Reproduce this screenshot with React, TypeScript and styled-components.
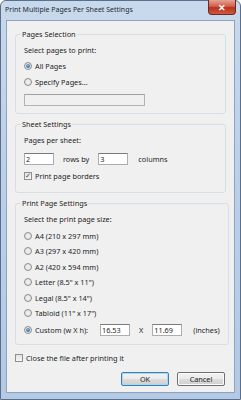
import React from "react";
import styled, { createGlobalStyle } from "styled-components";

const Global = createGlobalStyle`
  html, body { margin: 0; padding: 0; background: #ffffff; }
  body { font-family: "Noto Sans", "Liberation Sans", sans-serif; font-size: 7.3px; color: #1e1e1e; }
  * { box-sizing: border-box; }
`;

const Window = styled.div`
  width: 241px;
  height: 400px;
  background: linear-gradient(180deg, #c9d9ec 0%, #bcd0e8 40%, #b3c9e4 100%);
  border: 1px solid #5a6f8c;
  border-radius: 6px 6px 0 0;
  display: flex;
  flex-direction: column;
`;

const TitleBar = styled.div`
  height: 19px;
  display: flex;
  align-items: flex-start;
  justify-content: space-between;
  padding-left: 4px;
  padding-right: 4px;
`;

const Title = styled.span`
  margin-top: 4px;
  font-size: 7px;
  color: #1c2a3a;
`;

const CloseButton = styled.div`
  width: 28px;
  height: 15px;
  margin-top: -1px;
  border: 1px solid #6b2a22;
  border-top: none;
  border-radius: 0 0 4px 4px;
  background: linear-gradient(180deg, #e6a393 0%, #d0614c 45%, #b9311d 55%, #cf5b3e 100%);
  display: flex;
  align-items: center;
  justify-content: center;
  color: #ffffff;
  font-size: 9px;
  font-weight: bold;
`;

const Client = styled.div`
  flex: 1;
  margin: 0 5px 6px 5px;
  border: 1px solid #8da3bf;
  background: #f0f0f0;
  display: flex;
  flex-direction: column;
  padding: 8px 8px 0 8px;
`;

const Group = styled.fieldset`
  margin: 0 0 5px 0;
  padding: 6px 8px 6px 8px;
  border: 1px solid #d5dfe5;
  border-radius: 3px;
  display: flex;
  flex-direction: column;
  gap: 0;
`;

const Legend = styled.legend`
  padding: 0 1px;
  margin-left: -3px;
  line-height: 10px;
`;

const Label = styled.div<{ $mb?: number }>`
  line-height: 10px;
  margin-bottom: ${(p) => p.$mb ?? 0}px;
`;

const OptionRow = styled.div<{ $h?: number }>`
  display: flex;
  align-items: center;
  height: ${(p) => p.$h ?? 16}px;
  gap: 3px;
`;

const Radio = styled.span<{ $on?: boolean }>`
  width: 8px;
  height: 8px;
  border-radius: 50%;
  border: 1px solid #8f8f8f;
  background: radial-gradient(circle at 50% 50%, #f4f4f4 0%, #dcdcdc 100%);
  display: flex;
  align-items: center;
  justify-content: center;
  &::after {
    content: "";
    width: 4px;
    height: 4px;
    border-radius: 50%;
    background: ${(p) => (p.$on ? "radial-gradient(circle at 40% 35%, #7fb6e6, #17508f)" : "transparent")};
  }
`;

const Check = styled.span<{ $on?: boolean }>`
  width: 8px;
  height: 8px;
  border: 1px solid #8f8f8f;
  background: linear-gradient(180deg, #e4e4e4, #f6f6f6);
  display: flex;
  align-items: center;
  justify-content: center;
  color: #2b4c7a;
  font-size: 7px;
  line-height: 1;
`;

const TextBox = styled.div<{ $w: number; $disabled?: boolean }>`
  width: ${(p) => p.$w}px;
  height: 12px;
  border: 1px solid ${(p) => (p.$disabled ? "#b4b4b4" : "#abadb3")};
  border-top-color: ${(p) => (p.$disabled ? "#a0a0a0" : "#7a7a7a")};
  background: ${(p) => (p.$disabled ? "#f0f0f0" : "#ffffff")};
  font-size: 7.3px;
  line-height: 10px;
  padding-left: 1px;
`;

const InlineRow = styled.div<{ $mt?: number; $mb?: number }>`
  display: flex;
  align-items: center;
  height: 12px;
  margin-top: ${(p) => p.$mt ?? 0}px;
  margin-bottom: ${(p) => p.$mb ?? 0}px;
`;

const Spacer = styled.span<{ $w: number }>`
  display: inline-block;
  width: ${(p) => p.$w}px;
`;

const CustomLabel = styled.span`
  width: 62px;
`;

const Footer = styled.div`
  display: flex;
  flex-direction: column;
`;

const Buttons = styled.div`
  display: flex;
  justify-content: flex-end;
  gap: 8px;
  margin-top: 6px;
  padding-right: 1px;
`;

const Button = styled.div<{ $default?: boolean }>`
  width: 48px;
  height: 14px;
  border: 1px solid ${(p) => (p.$default ? "#3c7fb1" : "#707070")};
  border-radius: 2px;
  background: linear-gradient(180deg, #f2f2f2 0%, #ebebeb 50%, #dddddd 51%, #cfcfcf 100%);
  box-shadow: ${(p) => (p.$default ? "inset 0 0 0 1px #a8d8f4" : "inset 0 0 0 1px #fbfbfb")};
  display: flex;
  align-items: center;
  justify-content: center;
  line-height: 10px;
`;

const radios = [
  "A4 (210 x 297 mm)",
  "A3 (297 x 420 mm)",
  "A2 (420 x 594 mm)",
  "Letter (8.5\" x 11\")",
  "Legal (8.5\" x 14\")",
  "Tabloid (11\" x 17\")",
];

export default function App() {
  return (
    <>
      <Global />
      <Window>
        <TitleBar>
          <Title>Print Multiple Pages Per Sheet Settings</Title>
          <CloseButton>✕</CloseButton>
        </TitleBar>
        <Client>
          <Group>
            <Legend>Pages Selection</Legend>
            <Label $mb={3}>Select pages to print:</Label>
            <OptionRow>
              <Radio $on />
              <span>All Pages</span>
            </OptionRow>
            <OptionRow>
              <Radio />
              <span>Specify Pages...</span>
            </OptionRow>
            <InlineRow $mt={4} $mb={1}>
              <TextBox $w={121} $disabled />
            </InlineRow>
          </Group>
          <Group>
            <Legend>Sheet Settings</Legend>
            <Label $mb={8}>Pages per sheet:</Label>
            <InlineRow>
              <TextBox $w={30}>2</TextBox>
              <Spacer $w={9} />
              <span>rows by</span>
              <Spacer $w={9} />
              <TextBox $w={30}>3</TextBox>
              <Spacer $w={10} />
              <span>columns</span>
            </InlineRow>
            <OptionRow $h={21}>
              <Check $on>✓</Check>
              <span>Print page borders</span>
            </OptionRow>
          </Group>
          <Group>
            <Legend>Print Page Settings</Legend>
            <Label $mb={4}>Select the print page size:</Label>
            {radios.map((r) => (
              <OptionRow key={r} $h={15.5}>
                <Radio />
                <span>{r}</span>
              </OptionRow>
            ))}
            <OptionRow $h={17}>
              <Radio $on />
              <CustomLabel>Custom (w X h):</CustomLabel>
              <TextBox $w={30}>16.53</TextBox>
              <Spacer $w={3} />
              <span>X</span>
              <Spacer $w={3} />
              <TextBox $w={30}>11.69</TextBox>
              <Spacer $w={5} />
              <span>(inches)</span>
            </OptionRow>
          </Group>
          <Footer>
            <OptionRow>
              <Check />
              <span>Close the file after printing it</span>
            </OptionRow>
            <Buttons>
              <Button $default>OK</Button>
              <Button>Cancel</Button>
            </Buttons>
          </Footer>
        </Client>
      </Window>
    </>
  );
}
